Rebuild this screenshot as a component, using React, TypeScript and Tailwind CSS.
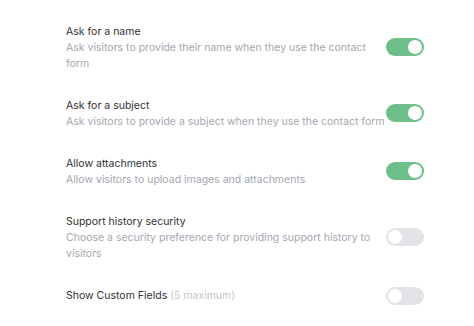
import React from "react";

type Row = { title: string; extra?: string; desc?: string; on: boolean };

const rows: Row[] = [
  { title: "Ask for a name", desc: "Ask visitors to provide their name when they use the contact form", on: true },
  { title: "Ask for a subject", desc: "Ask visitors to provide a subject when they use the contact form", on: true },
  { title: "Allow attachments", desc: "Allow visitors to upload images and attachments", on: true },
  { title: "Support history security", desc: "Choose a security preference for providing support history to visitors", on: false },
  { title: "Show Custom Fields", extra: "(5 maximum)", on: false },
];

function Toggle({ on }: { on: boolean }) {
  return on ? (
    <div className="w-[38px] h-[18px] rounded-full bg-[#6cbf88] flex items-center justify-end p-[2px] shrink-0">
      <div className="w-[14px] h-[14px] rounded-full bg-white" />
    </div>
  ) : (
    <div className="w-[38px] h-[18px] rounded-full bg-[#e2e4e7] flex items-center justify-start p-[2px] shrink-0">
      <div className="w-[14px] h-[14px] rounded-full bg-white" />
    </div>
  );
}

export default function App() {
  return (
    <div className="w-[474px] h-[326px] bg-white overflow-hidden" style={{ fontFamily: "Inter, 'Noto Sans', sans-serif" }}>
      <div className="ml-[66px] w-[358px] pt-[22.5px] flex flex-col gap-[25px]">
        {rows.map((r) => (
          <div key={r.title} className="flex items-center justify-between">
            <div className="max-w-[319px] flex flex-col">
              <div className="text-[10.5px] leading-[17px] text-[#2f3033]">
                {r.title}
                {r.extra && <span className="text-[#c3c6cc]"> {r.extra}</span>}
              </div>
              {r.desc && <div className="text-[10.5px] leading-[16px] text-[#a3a7b0]">{r.desc}</div>}
            </div>
            <Toggle on={r.on} />
          </div>
        ))}
      </div>
    </div>
  );
}
